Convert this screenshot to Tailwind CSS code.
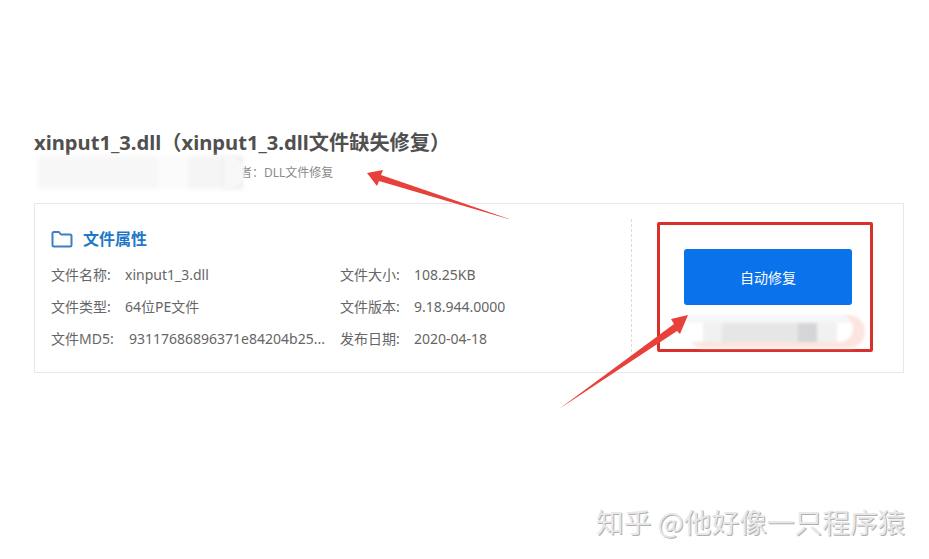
<!DOCTYPE html>
<html lang="zh-CN">
<head>
    <meta charset="UTF-8">
    <meta name="viewport" content="width=device-width, initial-scale=1.0">
    <title>xinput1_3.dll</title>
    <script src="https://cdn.jsdelivr.net/npm/@tailwindcss/browser@4"></script>
</head>
<body class="relative bg-white h-[559px] w-[929px] overflow-hidden font-['Noto_Sans','Noto_Sans_CJK_SC',sans-serif]">
    <div class="pl-[34px] pr-[25px] pt-[128px]">
        <!-- Title -->
        <h1 class="text-[20.2px] leading-[28px] font-bold text-[#505050]">xinput1_3.dll（xinput1_3.dll文件缺失修复）</h1>

        <!-- Meta row, the left part is smudged out -->
        <div class="relative h-[33px] flex items-center">
            <span class="ml-[206px] text-[12px] text-[#8a8a8a]">者：DLL文件修复</span>
            <div class="absolute left-[4px] top-0 h-[33px] w-[205px] flex blur-[2px]">
                <div class="w-[120px] bg-[#f7f7f7]"></div>
                <div class="w-[30px] bg-[#fbfbfb]"></div>
                <div class="w-[35px] bg-[#f5f5f5]"></div>
                <div class="w-[20px] bg-[#efefef]"></div>
            </div>
            <div class="absolute left-[190px] top-0 h-[33px] w-[20px] rounded-r-full bg-[#f8f8f8] blur-[1px]"></div>
        </div>

        <!-- Card -->
        <div class="mt-[14px] h-[170px] border border-[#e8e8e8] flex">
            <div class="w-[596px] pl-[16px] pt-[23px]">
                <div class="flex items-center gap-[10px] h-[24px]">
                    <svg class="w-[22px] h-[18px]" viewBox="0 0 22 18" fill="none" stroke="#3f7fc0" stroke-width="2" stroke-linejoin="round">
                        <path d="M1.5 3.5a1.5 1.5 0 0 1 1.5-1.5h5l2 2.5h9a1.5 1.5 0 0 1 1.5 1.5v9a1.5 1.5 0 0 1-1.5 1.5H3a1.5 1.5 0 0 1-1.5-1.5z"/>
                    </svg>
                    <span class="text-[16px] font-bold text-[#1e78c8]">文件属性</span>
                </div>
                <div class="mt-[8px] grid grid-cols-[289px_1fr] text-[14px] text-[#666] leading-[32px]">
                    <div class="flex"><span class="w-[74px]">文件名称:</span><span>xinput1_3.dll</span></div>
                    <div class="flex"><span class="w-[74px]">文件大小:</span><span>108.25KB</span></div>
                    <div class="flex"><span class="w-[74px]">文件类型:</span><span>64位PE文件</span></div>
                    <div class="flex"><span class="w-[74px]">文件版本:</span><span>9.18.944.0000</span></div>
                    <div class="flex"><span class="w-[78px]">文件MD5:</span><span>93117686896371e84204b25...</span></div>
                    <div class="flex"><span class="w-[74px]">发布日期:</span><span>2020-04-18</span></div>
                </div>
            </div>

            <!-- Dashed divider, button panel -->
            <div class="my-[15px] border-l border-dashed border-[#dcdcdc]"></div>
            <div class="ml-[25px] mt-[18px] w-[216px] h-[130px] border-[3px] border-[#d9302c] rounded-[2px]">
                <div class="mt-[24px] ml-[24px] w-[168px] h-[56px] bg-[#0a72ea] rounded-[3px] flex items-center justify-center text-[14px] text-white">自动修复</div>
                <div class="mt-[10px] ml-[27px] w-[178px] h-[33px] rounded-full bg-[#fce4df] blur-[1.5px]">
                    <div class="w-[166px] h-[27px] rounded-r-[14px] overflow-hidden bg-white">
                        <div class="h-[8px] bg-[#f4f6fa]"></div>
                        <div class="h-[19px] flex">
                            <div class="w-[16px]"></div>
                            <div class="w-[19px] bg-[#f1f1f1]"></div>
                            <div class="w-[76px] bg-[#e6e6e6]"></div>
                            <div class="w-[19px] bg-[#d5d5d7]"></div>
                            <div class="w-[20px] bg-[#f1f1f1]"></div>
                        </div>
                    </div>
                </div>
            </div>
        </div>
    </div>

    <!-- Annotation arrows -->
    <svg class="absolute left-0 top-0 pointer-events-none" width="929" height="559" viewBox="0 0 929 559">
        <polygon fill="#e8403a" points="367,173 383,170 381,175 512,220 379,181 377,186"/>
        <polygon fill="#e8403a" points="688,315 671,319 674,324 559,409 677,331 680,334"/>
    </svg>

    <!-- Watermark -->
    <div class="absolute left-[596px] top-[503px] text-[27.7px] leading-[36px] whitespace-nowrap text-[#e8e8e8] [text-shadow:1px_1px_0_#b0b0b0] font-['Noto_Sans_CJK_SC',sans-serif]">知乎 @他好像一只程序猿</div>
</body>
</html>
